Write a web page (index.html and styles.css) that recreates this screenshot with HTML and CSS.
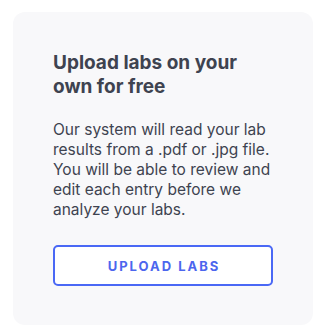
FILE: index.html
```html
<!DOCTYPE html>
<html>
<head>
<meta charset="utf-8">
<link rel="stylesheet" href="styles.css">
</head>
<body>
<div class="card">
  <h2 class="title">Upload labs on your own for free</h2>
  <p class="text">Our system will read your lab results from a .pdf or .jpg file. You will be able to review and edit each entry before we analyze your labs.</p>
  <button class="btn">UPLOAD LABS</button>
</div>
</body>
</html>
```
FILE: styles.css
```css
html, body { margin: 0; padding: 0; background: #fff; }
body { padding: 12px 16px 0 13px; font-family: Inter, "Liberation Sans", sans-serif; }
.card {
  width: 300px;
  height: 313px;
  box-sizing: border-box;
  background: #f8f8fa;
  border-radius: 12px;
  padding: 39px 40px 0 40px;
}
.title {
  margin: 0;
  font-size: 19px;
  line-height: 24px;
  font-weight: 700;
  color: #3e4350;
  width: 210px;
}
.text {
  margin: 21px 0 0;
  font-size: 15.5px;
  line-height: 20px;
  color: #3e4350;
}
.btn {
  display: block;
  margin-top: 25px;
  width: 220px;
  height: 41px;
  box-sizing: border-box;
  background: #fff;
  border: 2px solid #4a68f5;
  border-radius: 5px;
  color: #4c66ee;
  font-family: inherit;
  font-size: 13px;
  font-weight: 700;
  letter-spacing: 2px;
  padding: 0 0 0 2px;
}
```
